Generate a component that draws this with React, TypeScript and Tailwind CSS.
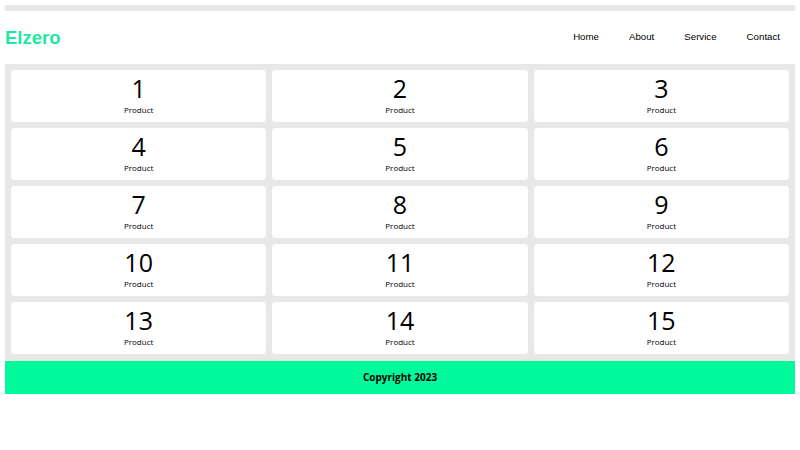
const links = ["Home", "About", "Service", "Contact"];
const products = Array.from({ length: 15 }, (_, i) => i + 1);

export default function App() {
  return (
    <div className="min-h-[450px] bg-white p-[5px]">
      <div className="bg-[#e8e8e8] pt-[6px]">
        <header className="flex h-[53px] items-center justify-between bg-white font-['Liberation_Sans',Arial,sans-serif]">
          <h1 className="text-[18.5px] font-bold text-[#1de9a4]">Elzero</h1>
          <nav className="flex">
            {links.map((l) => (
              <a key={l} href="#" className="px-[15px] text-[9.7px] text-black">
                {l}
              </a>
            ))}
          </nav>
        </header>
        <main className="grid grid-cols-3 gap-[6px] px-[6px] pb-[7px] pt-[6px] font-['Open_Sans',sans-serif]">
          {products.map((n) => (
            <div key={n} className="flex h-[52px] flex-col items-center rounded-[4px] bg-white pt-[4px]">
              <div className="text-[25px] leading-[28px] text-black">{n}</div>
              <div className="mt-[2px] text-[8px] leading-[12px] text-black">Product</div>
            </div>
          ))}
        </main>
        <footer className="flex h-[33px] items-center justify-center bg-[#00f99a] font-['Open_Sans',sans-serif] text-[10px] font-bold text-black">
          Copyright 2023
        </footer>
      </div>
    </div>
  );
}
